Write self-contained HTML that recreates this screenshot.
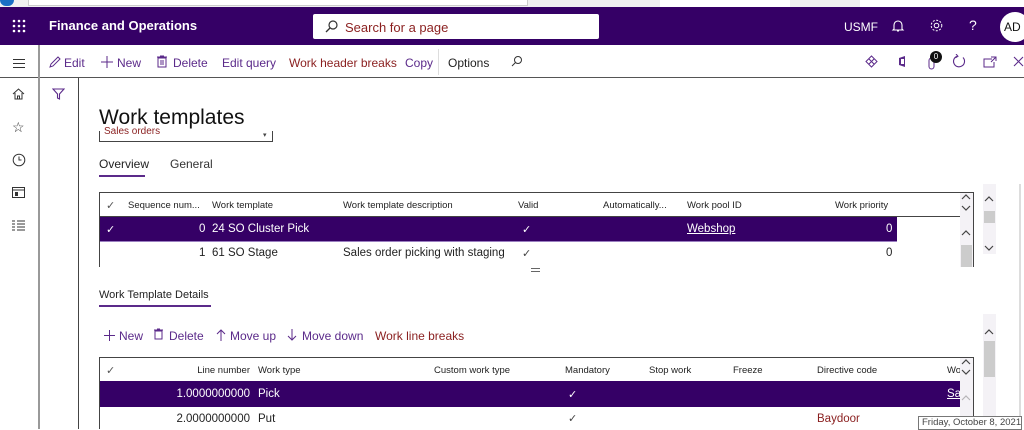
<!DOCTYPE html>
<html><head><meta charset="utf-8"><style>
*{margin:0;padding:0;box-sizing:border-box}
body{width:1024px;height:429px;overflow:hidden;background:#fff;font-family:"Liberation Sans",sans-serif;font-size:11px;color:#222;position:relative}
.a{position:absolute;white-space:nowrap}
.p{color:#5b2a8a}
.r{color:#8a1f1f}
.w{color:#fff}
svg{position:absolute}
.c{font-size:11.5px}
.h{font-size:9.5px}
</style></head><body>
<svg width="0" height="0"><defs><path id="up" d="M1 6L5 2L9 6" fill="none" stroke="#444" stroke-width="1.2"/><path id="dn" d="M1 2L5 6L9 2" fill="none" stroke="#444" stroke-width="1.2"/></defs></svg>
<!-- browser strip -->
<div class="a" style="left:0;top:0;width:1024px;height:7px;background:#f0f0f0"></div>
<div class="a" style="left:0;top:0;width:14px;height:6px;background:#1a6fc4;border-radius:0 0 7px 7px"></div>
<div class="a" style="left:28px;top:0;width:500px;height:6px;border:1px solid #ccc;border-top:none;background:#fff"></div>
<div class="a" style="left:660px;top:0;width:130px;height:7px;background:#fff"></div>
<div class="a" style="left:860px;top:0;width:164px;height:7px;background:#fff"></div>
<!-- header -->
<div class="a" style="left:0;top:7px;width:1024px;height:38px;background:#350066"></div>
<svg style="left:12px;top:19px" width="14" height="14"><g fill="#fff"><circle cx="2" cy="2" r="1.3"/><circle cx="7" cy="2" r="1.3"/><circle cx="12" cy="2" r="1.3"/><circle cx="2" cy="7" r="1.3"/><circle cx="7" cy="7" r="1.3"/><circle cx="12" cy="7" r="1.3"/><circle cx="2" cy="12" r="1.3"/><circle cx="7" cy="12" r="1.3"/><circle cx="12" cy="12" r="1.3"/></g></svg>
<div class="a w" style="left:49px;top:18px;font-size:13px;font-weight:bold">Finance and Operations</div>
<div class="a" style="left:313px;top:14px;width:286px;height:25px;background:#fff;border-radius:2px"></div>
<svg style="left:325px;top:20px" width="13" height="13"><circle cx="8" cy="5" r="4" fill="none" stroke="#333" stroke-width="1.2"/><path d="M5 8L1 12" stroke="#333" stroke-width="1.3"/></svg>
<div class="a" style="left:345px;top:20px;font-size:13px;color:#8a1f1f">Search for a page</div>
<div class="a w" style="left:844px;top:20px;font-size:12px">USMF</div>
<svg style="left:891px;top:19px" width="14" height="14"><path d="M3 10V6a4 4 0 0 1 8 0v4l1 1H2z M6 12h2" fill="none" stroke="#fff" stroke-width="1.1"/></svg>
<svg style="left:929px;top:18px" width="15" height="15"><circle cx="7.5" cy="7.5" r="2.3" fill="none" stroke="#fff"/><circle cx="7.5" cy="7.5" r="5.3" fill="none" stroke="#fff" stroke-dasharray="2 1.5"/></svg>
<div class="a w" style="left:969px;top:17px;font-size:14px">?</div>
<div class="a" style="left:1000px;top:12px;width:30px;height:30px;border-radius:50%;background:#fff"></div>
<div class="a" style="left:1004px;top:20px;font-size:12px;color:#111">AD</div>
<!-- action bar -->
<div class="a" style="left:0;top:77px;width:1024px;height:1px;background:#555"></div>
<div class="a" style="left:38px;top:45px;width:2px;height:384px;background:#999"></div>
<div class="a" style="left:78px;top:78px;width:1px;height:351px;background:#444"></div>
<div class="a" style="left:13px;top:59px;width:12px;height:1px;background:#333;box-shadow:0 4px 0 #333,0 8px 0 #333"></div>
<svg style="left:49px;top:56px" width="12" height="12"><path d="M1 11l1-3 7-7 2 2-7 7z" fill="none" stroke="#5b2a8a"/></svg>
<div class="a p" style="left:64px;top:56px;font-size:12px">Edit</div>
<svg style="left:101px;top:56px" width="12" height="12"><path d="M6 0v12M0 6h12" stroke="#5b2a8a"/></svg>
<div class="a p" style="left:117px;top:56px;font-size:12px">New</div>
<svg style="left:157px;top:55px" width="10" height="13"><rect x="1" y="3" width="8" height="9" fill="none" stroke="#5b2a8a"/><path d="M0 2h10M3 1h4M4 5v5M6 5v5" stroke="#5b2a8a"/></svg>
<div class="a p" style="left:173px;top:56px;font-size:12px">Delete</div>
<div class="a p" style="left:222px;top:56px;font-size:12px">Edit query</div>
<div class="a r" style="left:289px;top:56px;font-size:12px">Work header breaks</div>
<div class="a p" style="left:405px;top:56px;font-size:12px">Copy</div>
<div class="a" style="left:438px;top:49px;width:1px;height:26px;background:#ddd"></div>
<div class="a" style="left:448px;top:56px;font-size:12px;color:#222">Options</div>
<svg style="left:511px;top:55px" width="12" height="12"><circle cx="7" cy="5" r="3.5" fill="none" stroke="#333"/><path d="M4.5 7.5L1 11" stroke="#333"/></svg>
<svg style="left:865px;top:55px" width="13" height="13"><path d="M6.5 1L12 6.5 6.5 12 1 6.5z M4 4l5 5M9 4L4 9" fill="none" stroke="#5b2a8a"/></svg>
<svg style="left:897px;top:55px" width="11" height="13"><path d="M2 3l6-2v11l-6-2z" fill="#5b2a8a"/><rect x="4" y="4" width="3" height="5" fill="#fff"/></svg>
<svg style="left:928px;top:57px" width="8" height="13"><rect x="1" y="1" width="5" height="11" rx="2.5" fill="none" stroke="#5b2a8a"/></svg>
<div class="a" style="left:930px;top:51px;width:12px;height:12px;border-radius:50%;background:#111;color:#fff;font-size:8px;text-align:center;line-height:12px">0</div>
<svg style="left:952px;top:54px" width="15" height="15"><path d="M11 3.5A5.5 5.5 0 1 1 5 2.2" fill="none" stroke="#5b2a8a" stroke-width="1.1"/><path d="M4 0l2 2.3-2.5 1.5" fill="none" stroke="#5b2a8a"/></svg>
<svg style="left:983px;top:56px" width="14" height="12"><path d="M9 3H1v8h10V6 M8 1h5v4 M13 1L8 6" fill="none" stroke="#5b2a8a"/></svg>
<svg style="left:1013px;top:56px" width="11" height="11"><path d="M1 1l9 9M10 1L1 10" stroke="#5b2a8a" stroke-width="1.1"/></svg>
<!-- left nav icons -->
<svg style="left:12px;top:88px" width="13" height="12"><path d="M1 6L6.5 1 12 6M3 5v6h7V5M5.5 11V8h2v3" fill="none" stroke="#333"/></svg>
<div class="a" style="left:12px;top:119px;font-size:14px;color:#333">☆</div>
<svg style="left:12px;top:153px" width="14" height="14"><circle cx="7" cy="7" r="5.8" fill="none" stroke="#333"/><path d="M7 3.5V7h2.5" fill="none" stroke="#333"/></svg>
<svg style="left:12px;top:187px" width="13" height="11"><rect x="0.5" y="0.5" width="12" height="10" fill="none" stroke="#333"/><path d="M0.5 3h12" stroke="#333"/><rect x="3" y="5" width="3" height="4" fill="#333"/></svg>
<svg style="left:12px;top:220px" width="13" height="12"><path d="M0 1h3M0 4h3M0 7h3M0 10h3M5 1h8M5 4h8M5 7h8M5 10h8" stroke="#333"/></svg>
<svg style="left:52px;top:88px" width="13" height="12"><path d="M1 1h11L7.5 6v5l-2-1V6z" fill="none" stroke="#5b2a8a" stroke-width="1.1"/></svg>
<!-- content -->
<div class="a" style="left:99px;top:106px;font-size:21px;color:#111;font-weight:500">Work templates</div>
<div class="a" style="left:99px;top:131px;width:174px;height:11px;border:1px solid #444;border-top:none"></div>
<div class="a r" style="left:104px;top:126px;font-size:10px;height:8px;overflow:hidden">Sales orders</div>
<div class="a" style="left:263px;top:131px;font-size:7px;color:#444">▾</div>
<div class="a" style="left:99px;top:157px;font-size:12px">Overview</div>
<div class="a" style="left:99px;top:175px;width:46px;height:2px;background:#5b2a8a"></div>
<div class="a" style="left:170px;top:157px;font-size:12px;color:#333">General</div>
<!-- grid 1 -->
<div class="a" style="left:99px;top:192px;width:875px;height:75px;border:1px solid #444;border-bottom:none"></div>
<div class="a" style="left:100px;top:216px;width:797px;height:26px;background:#350066;border-bottom:1px solid #9a7fc0"></div>
<div class="a" style="left:100px;top:216px;width:860px;height:1px;background:#444"></div>
<div class="a" style="left:960px;top:193px;width:13px;height:74px;background:#f4f2f6"></div>
<div class="a" style="left:961px;top:245px;width:11px;height:22px;background:#ccc"></div>
<svg style="left:961px;top:193px" width="10" height="8"><use href="#up"/></svg>
<svg style="left:961px;top:204px" width="10" height="8"><use href="#dn"/></svg>
<svg style="left:961px;top:229px" width="10" height="8"><use href="#up"/></svg>
<div class="a" style="left:106px;top:199px;color:#555">✓</div>
<div class="a h" style="left:128px;top:200px">Sequence num...</div>
<div class="a h" style="left:212px;top:200px">Work template</div>
<div class="a h" style="left:343px;top:200px">Work template description</div>
<div class="a h" style="left:518px;top:200px">Valid</div>
<div class="a h" style="left:603px;top:200px">Automatically...</div>
<div class="a h" style="left:687px;top:200px">Work pool ID</div>
<div class="a h" style="left:835px;top:200px">Work priority</div>
<div class="a w" style="left:106px;top:223px">✓</div>
<div class="a w c" style="left:199px;top:223px">0</div>
<div class="a w c" style="left:212px;top:223px">24 SO Cluster Pick</div>
<div class="a w" style="left:522px;top:223px">✓</div>
<div class="a w c" style="left:687px;top:223px;text-decoration:underline">Webshop</div>
<div class="a w c" style="left:886px;top:223px">0</div>
<div class="a c" style="left:199px;top:247px">1</div>
<div class="a c" style="left:212px;top:247px">61 SO Stage</div>
<div class="a c" style="left:343px;top:247px">Sales order picking with staging</div>
<div class="a" style="left:522px;top:247px;color:#444">✓</div>
<div class="a c" style="left:886px;top:247px">0</div>
<div class="a" style="left:531px;top:268px;width:9px;height:1px;background:#666;box-shadow:0 3px 0 #666"></div>
<!-- outer scrollbars -->
<div class="a" style="left:983px;top:184px;width:13px;height:70px;background:#f4f2f6"></div>
<div class="a" style="left:984px;top:211px;width:11px;height:12px;background:#ccc"></div>
<svg style="left:984px;top:195px" width="10" height="8"><use href="#up"/></svg>
<svg style="left:984px;top:244px" width="10" height="8"><use href="#dn"/></svg>
<div class="a" style="left:983px;top:314px;width:13px;height:115px;background:#f4f2f6"></div>
<div class="a" style="left:984px;top:341px;width:11px;height:36px;background:#ccc"></div>
<svg style="left:984px;top:328px" width="10" height="8"><use href="#up"/></svg>
<svg style="left:984px;top:418px" width="10" height="8"><use href="#dn"/></svg>
<div class="a" style="left:1019px;top:184px;width:2px;height:245px;background:#ddd"></div>
<!-- details -->
<div class="a" style="left:99px;top:289px;font-size:11px">Work Template Details</div>
<div class="a" style="left:99px;top:305px;width:112px;height:2px;background:#5b2a8a"></div>
<svg style="left:104px;top:330px" width="11" height="11"><path d="M5.5 0v11M0 5.5h11" stroke="#5b2a8a"/></svg>
<div class="a p" style="left:119px;top:329px;font-size:12px">New</div>
<svg style="left:154px;top:328px" width="9" height="12"><rect x="1" y="3" width="7" height="8" fill="none" stroke="#5b2a8a"/><path d="M0 2h9M3 1h3" stroke="#5b2a8a"/></svg>
<div class="a p" style="left:169px;top:329px;font-size:12px">Delete</div>
<svg style="left:216px;top:329px" width="10" height="12"><path d="M5 12V1M1 5l4-4 4 4" fill="none" stroke="#5b2a8a"/></svg>
<div class="a p" style="left:230px;top:329px;font-size:12px">Move up</div>
<svg style="left:287px;top:329px" width="10" height="12"><path d="M5 0v11M1 7l4 4 4-4" fill="none" stroke="#5b2a8a"/></svg>
<div class="a p" style="left:302px;top:329px;font-size:12px">Move down</div>
<div class="a r" style="left:375px;top:329px;font-size:12px">Work line breaks</div>
<!-- grid 2 -->
<div class="a" style="left:99px;top:357px;width:875px;height:72px;border:1px solid #444;border-bottom:none"></div>
<div class="a" style="left:100px;top:381px;width:860px;height:26px;background:#350066"></div>
<div class="a" style="left:960px;top:358px;width:13px;height:71px;background:#f4f2f6"></div>
<svg style="left:961px;top:358px" width="10" height="8"><use href="#up"/></svg>
<svg style="left:961px;top:368px" width="10" height="8"><use href="#dn"/></svg>
<svg style="left:961px;top:394px;opacity:.35" width="10" height="8"><use href="#up"/></svg>
<div class="a" style="left:106px;top:364px;color:#555">✓</div>
<div class="a h" style="left:150px;top:365px;width:100px;text-align:right">Line number</div>
<div class="a h" style="left:258px;top:365px">Work type</div>
<div class="a h" style="left:434px;top:365px">Custom work type</div>
<div class="a h" style="left:565px;top:365px">Mandatory</div>
<div class="a h" style="left:649px;top:365px">Stop work</div>
<div class="a h" style="left:733px;top:365px">Freeze</div>
<div class="a h" style="left:817px;top:365px">Directive code</div>
<div class="a h" style="left:947px;top:365px;width:13px;overflow:hidden">Work</div>
<div class="a w c" style="left:130px;top:388px;width:120px;text-align:right">1.0000000000</div>
<div class="a w c" style="left:258px;top:388px">Pick</div>
<div class="a w" style="left:568px;top:388px">✓</div>
<div class="a w c" style="left:947px;top:388px;text-decoration:underline;width:13px;overflow:hidden">Sales</div>
<div class="a c" style="left:130px;top:413px;width:120px;text-align:right">2.0000000000</div>
<div class="a c" style="left:258px;top:413px">Put</div>
<div class="a" style="left:568px;top:412px;color:#444">✓</div>
<div class="a r c" style="left:817px;top:413px">Baydoor</div>
<!-- tooltip -->
<div class="a" style="left:918px;top:416px;width:104px;height:14px;background:#fff;border:1px solid #777;font-size:9.5px;color:#444;padding-left:3px;line-height:12px;overflow:hidden">Friday, October 8, 2021</div>
</body></html>
